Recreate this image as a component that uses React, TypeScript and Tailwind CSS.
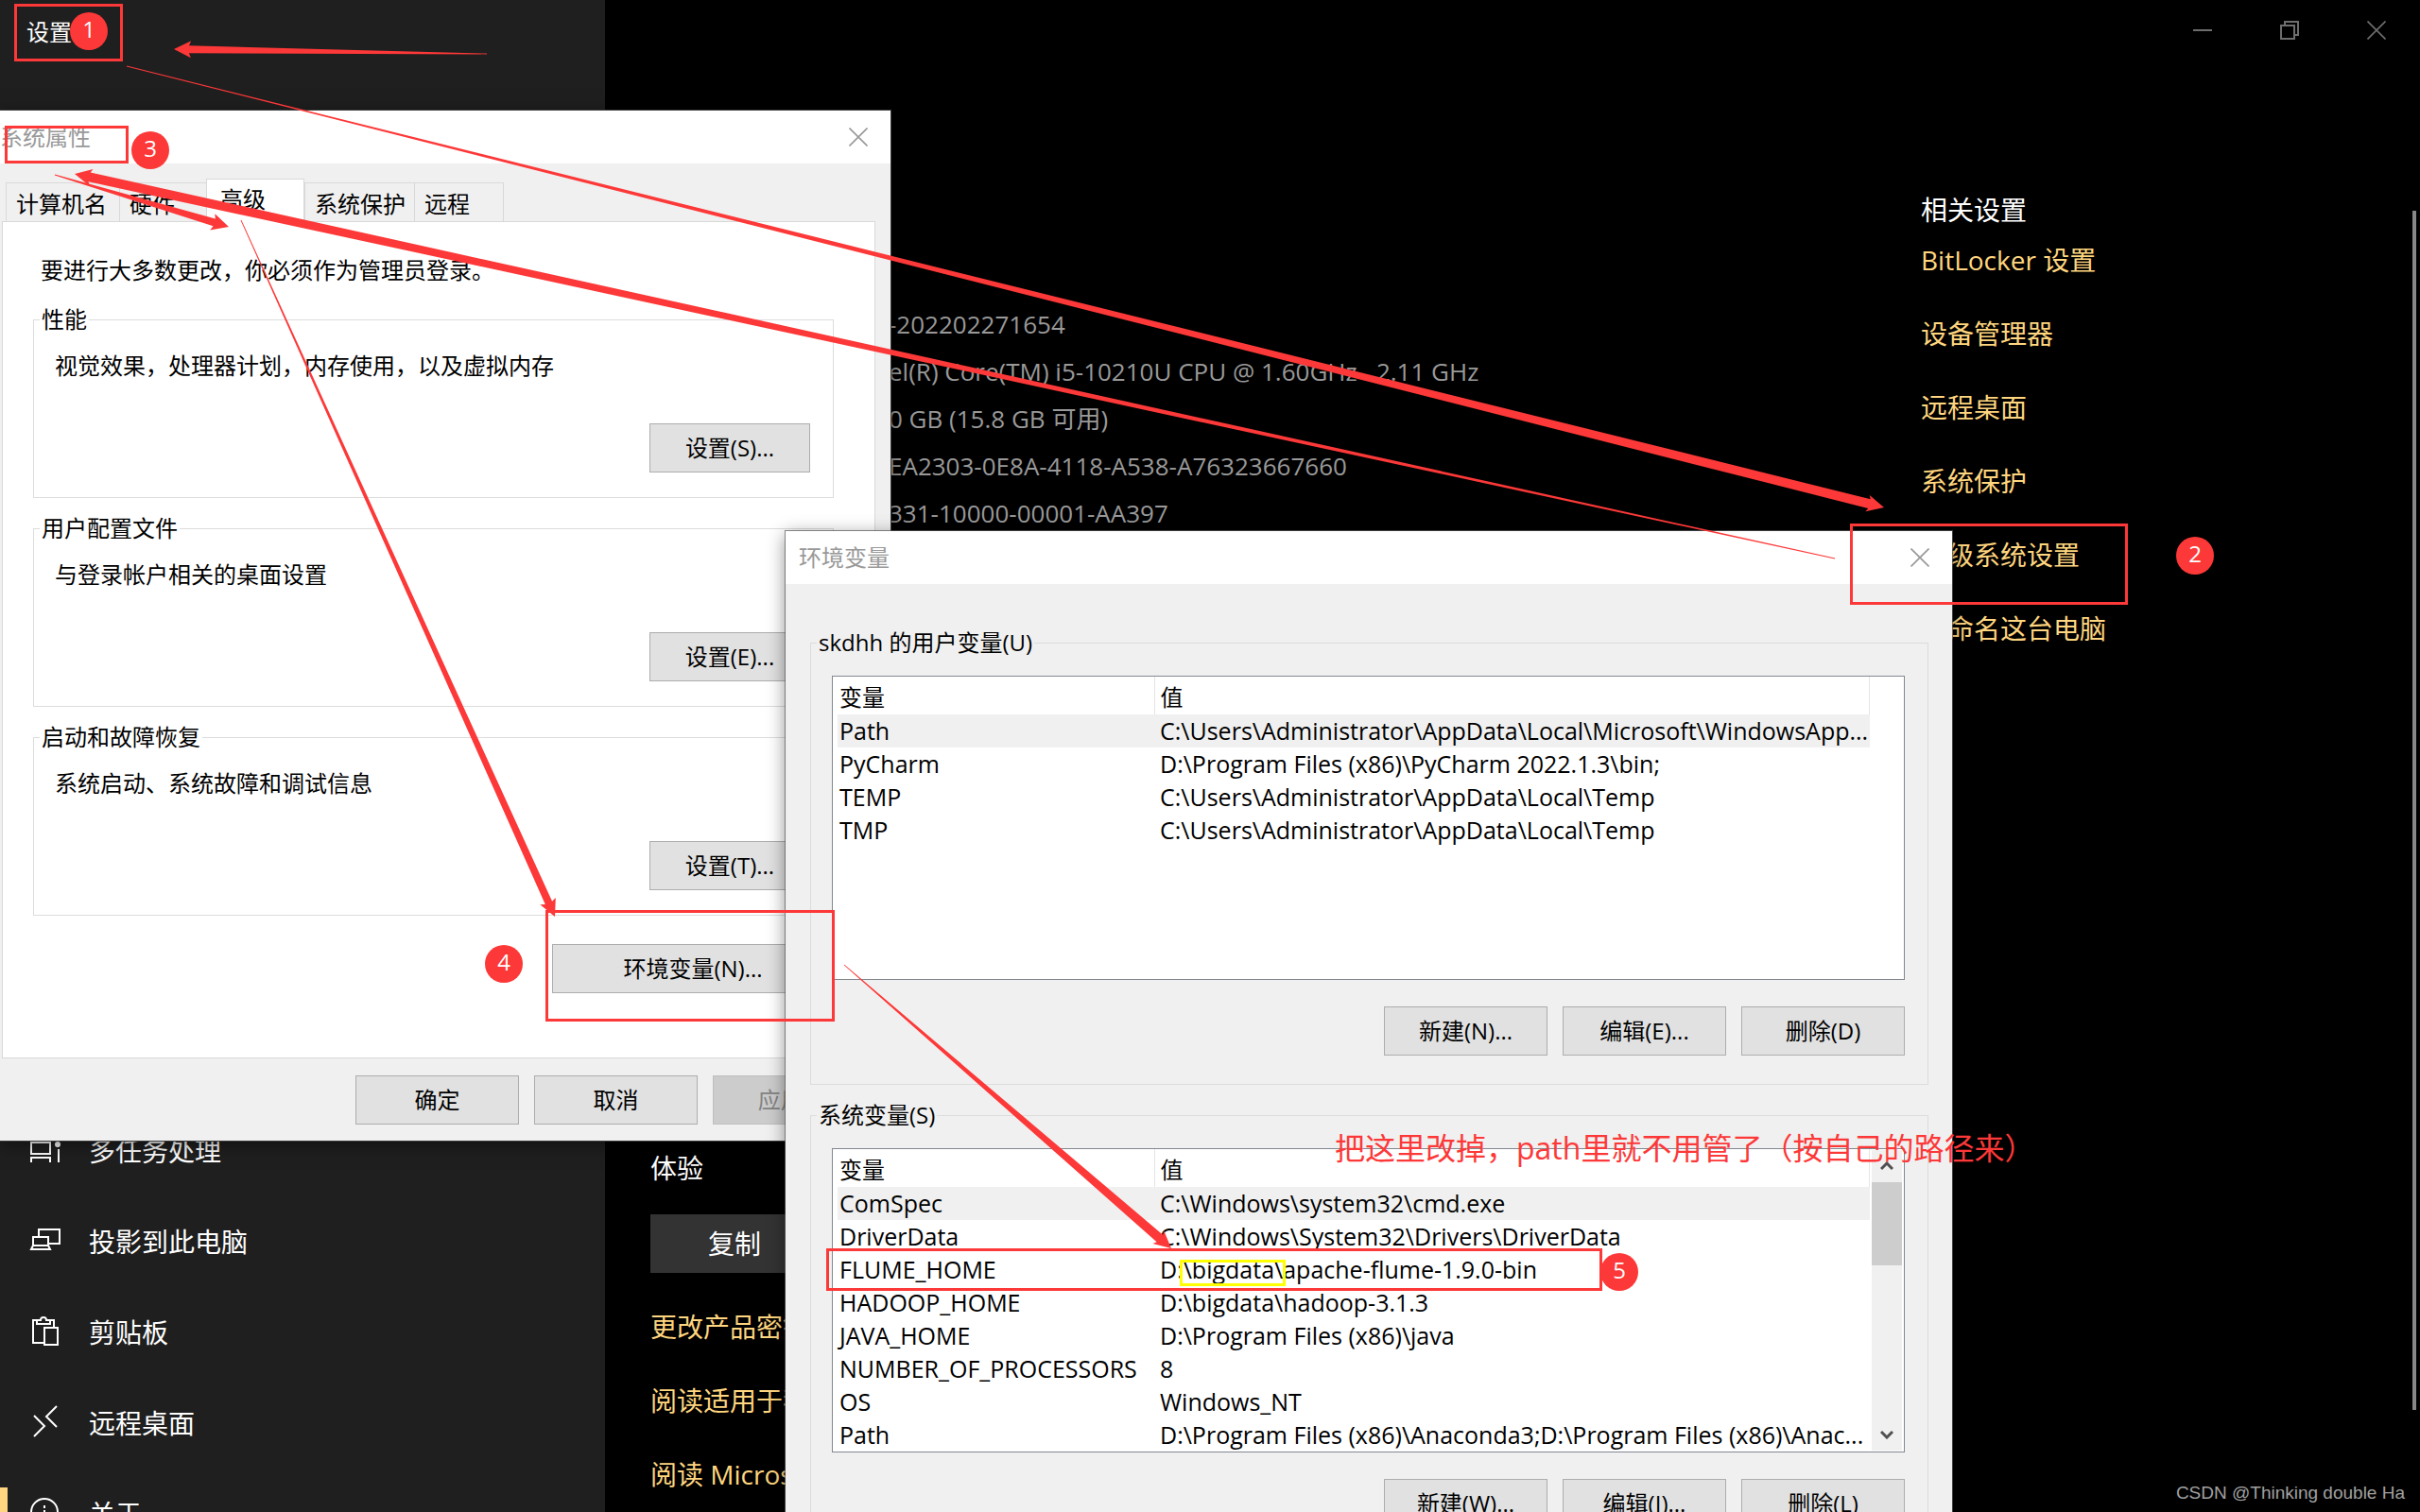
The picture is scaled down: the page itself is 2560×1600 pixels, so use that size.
import React from "react";

type Point = [number, number];

const FONT = "font-['Open_Sans','Noto_Sans_CJK_SC',sans-serif]";

/* ---------- icons ---------- */

function CloseIcon() {
  return (
    <svg width="20" height="20" viewBox="0 0 20 20" fill="none" stroke="currentColor" strokeWidth="1.6">
      <path d="M0.5 0.5 19.5 19.5M19.5 0.5 0.5 19.5" />
    </svg>
  );
}

function MinimizeIcon() {
  return (
    <svg width="20" height="20" viewBox="0 0 20 20" fill="currentColor">
      <rect x="0" y="9" width="20" height="2" />
    </svg>
  );
}

function RestoreIcon() {
  return (
    <svg width="20" height="20" viewBox="0 0 20 20" fill="none" stroke="currentColor" strokeWidth="2">
      <rect x="1" y="5" width="14" height="14" />
      <path d="M5 5V1h14v14h-4" />
    </svg>
  );
}

function Glyph({ children }: { children: React.ReactNode }) {
  return (
    <svg width="32" height="32" viewBox="0 0 32 32" fill="none" stroke="currentColor" strokeWidth="2" className="shrink-0 overflow-visible">
      {children}
    </svg>
  );
}

const MultitaskGlyph = (
  <Glyph>
    <path d="M1 7h20v12H1zM1 28v-5h20v5M30 14v14" />
    <circle cx="29" cy="9" r="3" fill="currentColor" stroke="none" />
  </Glyph>
);

const ProjectGlyph = (
  <Glyph>
    <path d="M9 10V3h22v15H20" />
    <path d="M3 11h16v9H3zM3 20l-2 4h20l-2-4" />
  </Glyph>
);

const ClipboardGlyph = (
  <Glyph>
    <path d="M7 3H3v24h11M21 3h4v7" />
    <path d="M7 7h14V3h-4a3 3 0 0 0-6 0H7z" />
    <path d="M15 11h14v18H15z" />
  </Glyph>
);

const RemoteGlyph = (
  <Glyph>
    <path d="M4 8l11 11L4 30M28-2 17 9l11 11" />
  </Glyph>
);

const AboutGlyph = (
  <Glyph>
    <circle cx="15" cy="14" r="14" />
    <path d="M15 12v10M15 7v3" />
  </Glyph>
);

/* ---------- settings window ---------- */

const navItems = [
  { label: "多任务处理", icon: MultitaskGlyph },
  { label: "投影到此电脑", icon: ProjectGlyph },
  { label: "剪贴板", icon: ClipboardGlyph },
  { label: "远程桌面", icon: RemoteGlyph },
  { label: "关于", icon: AboutGlyph, current: true },
];

function Sidebar() {
  return (
    <aside className="flex w-1/4 shrink-0 flex-col bg-[#1f1f1f] text-white">
      <h2 className="pt-4 pl-7 text-2xl leading-9">设置</h2>
      <nav className="mt-[1118px] flex flex-col">
        {navItems.map((item) => (
          <a
            key={item.label}
            href="#"
            className={
              item.current
                ? "relative flex h-24 shrink-0 items-center gap-[30px] pl-8 text-[28px] before:absolute before:top-5 before:left-0 before:h-14 before:w-2 before:bg-[#ffd67f]"
                : "flex h-24 shrink-0 items-center gap-[30px] pl-8 text-[28px]"
            }
          >
            {item.icon}
            {item.label}
          </a>
        ))}
      </nav>
    </aside>
  );
}

const specs = [
  "-202202271654",
  "el(R) Core(TM) i5-10210U CPU @ 1.60GHz   2.11 GHz",
  "0 GB (15.8 GB 可用)",
  "EA2303-0E8A-4118-A538-A76323667660",
  "331-10000-00001-AA397",
];

const supportLinks = ["更改产品密钥或升级 Windows", "阅读适用于我们服务的 Microsoft 服务协议", "阅读 Microsoft 软件许可条款"];

const relatedLinks = ["BitLocker 设置", "设备管理器", "远程桌面", "系统保护", "高级系统设置", "重命名这台电脑"];

function SettingsMain() {
  return (
    <main className="relative flex min-w-0 flex-1 flex-col bg-black">
      <div className="flex h-16 shrink-0 justify-end gap-[72px] pt-[22px] pr-9 text-[#6e6e6e]">
        <button aria-label="最小化" className="h-5"><MinimizeIcon /></button>
        <button aria-label="还原" className="h-5"><RestoreIcon /></button>
        <button aria-label="关闭" className="h-5"><CloseIcon /></button>
      </div>
      <div className="flex pl-12">
        <section className="flex min-w-0 flex-1 flex-col items-start">
          <ul className="mt-[254px] ml-[252px] text-[26px] leading-[50px] whitespace-pre text-[#999]">
            {specs.map((s) => (
              <li key={s}>{s}</li>
            ))}
          </ul>
          <p className="mt-[648px] text-[28px] leading-10 text-white">体验</p>
          <button className="mt-[29px] h-[62px] w-[178px] bg-[#333] text-[28px] text-white">复制</button>
          <div className="mt-[18px] flex flex-col text-[28px] leading-[78px] text-[#ffd67f]">
            {supportLinks.map((s) => (
              <a key={s} href="#" className="whitespace-nowrap">{s}</a>
            ))}
          </div>
        </section>
        <aside className="flex w-[528px] shrink-0 flex-col pt-[138px]">
          <h3 className="text-[28px] leading-10 text-white">相关设置</h3>
          <div className="-mt-1.5 flex flex-col text-[28px] leading-[78px] text-[#ffd67f]">
            {relatedLinks.map((s) => (
              <a key={s} href="#">{s}</a>
            ))}
          </div>
        </aside>
      </div>
      <div className="absolute top-[223px] right-1 h-[1269px] w-1 bg-[#888]" />
    </main>
  );
}

/* ---------- shared dialog parts ---------- */

function TitleBar({ title, className }: { title: string; className: string }) {
  return (
    <header className={`flex h-14 items-center justify-between bg-white pr-6 text-2xl text-[#999] ${className}`}>
      <h2>{title}</h2>
      <button aria-label={`关闭${title}`}><CloseIcon /></button>
    </header>
  );
}

function PushButton({ children, className = "w-[173px]", disabled }: { children: string; className?: string; disabled?: boolean }) {
  return (
    <button
      disabled={disabled}
      className={`h-[52px] shrink-0 border text-2xl whitespace-nowrap ${disabled ? "border-[#bfbfbf] bg-[#ccc] text-[#838383]" : "border-[#adadad] bg-[#e1e1e1] text-black"} ${className}`}
    >
      {children}
    </button>
  );
}

/* ---------- system properties ---------- */

const tabs = [
  { label: "计算机名", width: "w-[120px]" },
  { label: "硬件", width: "w-[92px]" },
  { label: "高级", width: "w-[104px]", active: true },
  { label: "系统保护", width: "w-[116px]" },
  { label: "远程", width: "w-[95px]" },
];

const groups = [
  { legend: "性能", text: "视觉效果，处理器计划，内存使用，以及虚拟内存", button: "设置(S)..." },
  { legend: "用户配置文件", text: "与登录帐户相关的桌面设置", button: "设置(E)..." },
  { legend: "启动和故障恢复", text: "系统启动、系统故障和调试信息", button: "设置(T)..." },
];

function SystemProperties() {
  return (
    <section className="absolute top-[117px] left-0 w-[942px] bg-[#f0f0f0] text-2xl text-black shadow-[0_4px_18px_rgba(0,0,0,0.5)] ring-1 ring-[#3c3c3c]">
      <TitleBar title="系统属性" className="pl-0" />
      <div role="tablist" className="relative mt-4 flex h-[46px] items-end pl-1.5">
        {tabs.map((t) =>
          t.active ? (
            <button key={t.label} role="tab" aria-selected className={`h-[46px] border border-b-0 border-[#d9d9d9] bg-white pb-1 pl-3.5 text-left ${t.width}`}>
              {t.label}
            </button>
          ) : (
            <button key={t.label} role="tab" aria-selected={false} className={`mb-px h-[41px] border border-r-0 border-b-0 border-[#d9d9d9] pt-1 pl-2.5 text-left whitespace-nowrap last:border-r ${t.width}`}>
              {t.label}
            </button>
          ),
        )}
      </div>
      <div className="-mt-px mr-4 ml-0.5 flex flex-col gap-4 border border-[#d9d9d9] bg-white pt-[35px] pr-[43px] pb-[68px] pl-8">
        <p className="mb-1 pl-2 leading-8">要进行大多数更改，你必须作为管理员登录。</p>
        {groups.map((g) => (
          <fieldset key={g.legend} className="border border-[#dcdcdc] px-1.5">
            <legend className="px-0.5 leading-8">{g.legend}</legend>
            <div className="flex flex-col pt-[17px] pr-[18px] pb-[26px] pl-4">
              <p className="leading-8">{g.text}</p>
              <PushButton className="mt-[45px] w-[170px] self-end">{g.button}</PushButton>
            </div>
          </fieldset>
        ))}
        <PushButton className="mt-[14px] w-[298px] self-end">环境变量(N)...</PushButton>
      </div>
      <div className="flex justify-end gap-4 pt-[18px] pr-[15px] pb-[17px]">
        <PushButton>确定</PushButton>
        <PushButton>取消</PushButton>
        <PushButton disabled>应用(A)</PushButton>
      </div>
    </section>
  );
}

/* ---------- environment variables ---------- */

const userVars = [
  ["Path", "C:\\Users\\Administrator\\AppData\\Local\\Microsoft\\WindowsApp..."],
  ["PyCharm", "D:\\Program Files (x86)\\PyCharm 2022.1.3\\bin;"],
  ["TEMP", "C:\\Users\\Administrator\\AppData\\Local\\Temp"],
  ["TMP", "C:\\Users\\Administrator\\AppData\\Local\\Temp"],
];

const systemVars = [
  ["ComSpec", "C:\\Windows\\system32\\cmd.exe"],
  ["DriverData", "C:\\Windows\\System32\\Drivers\\DriverData"],
  ["FLUME_HOME", "D:\\bigdata\\apache-flume-1.9.0-bin"],
  ["HADOOP_HOME", "D:\\bigdata\\hadoop-3.1.3"],
  ["JAVA_HOME", "D:\\Program Files (x86)\\java"],
  ["NUMBER_OF_PROCESSORS", "8"],
  ["OS", "Windows_NT"],
  ["Path", "D:\\Program Files (x86)\\Anaconda3;D:\\Program Files (x86)\\Anac..."],
];

function ScrollBar() {
  return (
    <div className="my-px mr-0.5 flex w-8 flex-col items-center bg-[#f0f0f0] text-[#505050]">
      <button aria-label="向上滚动" className="flex h-[34px] items-center">
        <svg width="14" height="10" viewBox="0 0 14 10" fill="none" stroke="currentColor" strokeWidth="3"><path d="M1 8l6-6 6 6" /></svg>
      </button>
      <div className="h-[88px] w-full bg-[#cdcdcd]" />
      <button aria-label="向下滚动" className="mt-auto flex h-[34px] items-center">
        <svg width="14" height="10" viewBox="0 0 14 10" fill="none" stroke="currentColor" strokeWidth="3"><path d="M1 2l6 6 6-6" /></svg>
      </button>
    </div>
  );
}

function VariableGroup({ legend, rows, buttons, scroll }: { legend: string; rows: string[][]; buttons: string[]; scroll?: boolean }) {
  return (
    <fieldset className="min-w-0 border border-[#dcdcdc] px-1.5">
      <legend className="px-0.5 leading-8">{legend}</legend>
      <div className="pt-[19px] pr-[18px] pb-[30px] pl-4">
        <div className="flex h-[322px] justify-between border border-[#828790] bg-white">
          <table className="ml-[5px] w-[1092px] table-fixed self-start text-left">
            <thead>
              <tr className="h-10">
                <th className="w-[335px] border-r border-[#e5e5e5] p-0 pt-1 pl-0.5 leading-8 font-normal">变量</th>
                <th className="border-r border-[#e5e5e5] p-0 pt-1 pl-1.5 leading-8 font-normal">值</th>
              </tr>
            </thead>
            <tbody className="text-[25px]">
              {rows.map(([name, value], i) => (
                <tr key={name} className={i === 0 ? "h-[35px] bg-[#f0f0f0]" : "h-[35px]"}>
                  <td className="p-0 pl-0.5 leading-[35px] whitespace-nowrap">{name}</td>
                  <td className="p-0 pl-1.5 leading-[35px] whitespace-nowrap">{value}</td>
                </tr>
              ))}
            </tbody>
          </table>
          {scroll && <ScrollBar />}
        </div>
        <div className="mt-7 flex justify-end gap-4">
          {buttons.map((b) => (
            <PushButton key={b}>{b}</PushButton>
          ))}
        </div>
      </div>
    </fieldset>
  );
}

function EnvironmentVariables() {
  return (
    <section className="absolute top-[562px] left-[831px] w-[1234px] bg-[#f0f0f0] text-2xl text-black shadow-[0_4px_18px_rgba(0,0,0,0.45)] ring-1 ring-[#5a5a5a]/70">
      <TitleBar title="环境变量" className="pl-3.5" />
      <div className="flex flex-col gap-4 pt-[46px] pr-[25px] pb-8 pl-[26px]">
        <VariableGroup legend="skdhh 的用户变量(U)" rows={userVars} buttons={["新建(N)...", "编辑(E)...", "删除(D)"]} />
        <VariableGroup legend="系统变量(S)" rows={systemVars} buttons={["新建(W)...", "编辑(I)...", "删除(L)"]} scroll />
      </div>
    </section>
  );
}

/* ---------- annotations ---------- */

const arrows: { tail: Point; tip: Point; half: number }[] = [
  { tail: [515, 57], tip: [184, 52], half: 4 },
  { tail: [134, 70], tip: [1993, 537], half: 5 },
  { tail: [1941, 591], tip: [79, 184], half: 5 },
  { tail: [58, 185], tip: [242, 240], half: 4 },
  { tail: [255, 233], tip: [587, 970], half: 4 },
  { tail: [893, 1021], tip: [1239, 1321], half: 5 },
];

/* A wedge that widens from the tail to the head, ending in a barbed tip. */
function wedge({ tail, tip, half }: { tail: Point; tip: Point; half: number }) {
  const dx = tip[0] - tail[0];
  const dy = tip[1] - tail[1];
  const len = Math.hypot(dx, dy);
  const [ux, uy] = [dx / len, dy / len];
  const at = (back: number, side: number) => `${tip[0] - ux * back - uy * side},${tip[1] - uy * back + ux * side}`;
  return [at(len, 0.4), at(16, half), at(18, 9), at(0, 0), at(18, -9), at(16, -half), at(len, -0.4)].join(" ");
}

const frames = [
  "top-1 left-[15px] h-[61px] w-[115px] border-[#fd3838]",
  "top-[133px] left-[5px] h-10 w-[131px] border-[#fd3838]",
  "top-[554px] left-[1957px] h-[86px] w-[294px] border-[#fd3838]",
  "top-[963px] left-[577px] h-[118px] w-[306px] border-[#fd3838]",
  "top-[1321px] left-[874px] h-[45px] w-[821px] border-[#fd3838]",
  "top-[1333px] left-[1248px] h-7 w-[112px] border-[#ffff00]",
];

const badges = [
  { n: 1, at: "top-[13px] left-[74px]" },
  { n: 2, at: "top-[568px] left-[2302px]" },
  { n: 3, at: "top-[139px] left-[139px]" },
  { n: 4, at: "top-[1000px] left-[513px]" },
  { n: 5, at: "top-[1326px] left-[1693px]" },
];

function Annotations() {
  return (
    <div className="pointer-events-none absolute inset-0">
      {frames.map((f) => (
        <div key={f} className={`absolute border-3 ${f}`} />
      ))}
      <svg width="2560" height="1600" viewBox="0 0 2560 1600" fill="#fd3838" className="absolute top-0 left-0 max-w-none">
        {arrows.map((a) => (
          <polygon key={a.tip.join()} points={wedge(a)} />
        ))}
      </svg>
      {badges.map((b) => (
        <span key={b.n} className={`absolute flex size-10 items-center justify-center rounded-full bg-[#fd3838] pb-1 text-2xl leading-none text-white ${b.at}`}>
          {b.n}
        </span>
      ))}
      <p className="absolute top-[1191px] left-[1412px] text-[32px] leading-12 whitespace-nowrap text-[#fd3838]">
        把这里改掉，path里就不用管了（按自己的路径来）
      </p>
      <p className="absolute right-4 bottom-1 font-['Liberation_Sans',sans-serif] text-[19px] leading-8 text-[#a0a0a0]">CSDN @Thinking double Ha</p>
    </div>
  );
}

export default function App() {
  return (
    <div lang="zh-CN" className={`relative flex h-screen w-full overflow-hidden bg-black ${FONT}`}>
      <Sidebar />
      <SettingsMain />
      <SystemProperties />
      <EnvironmentVariables />
      <Annotations />
    </div>
  );
}
